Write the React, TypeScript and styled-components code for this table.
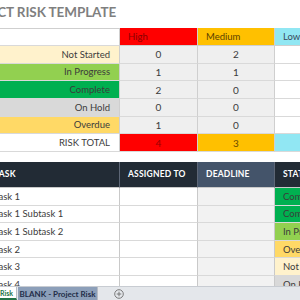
import React from "react";
import styled, { createGlobalStyle } from "styled-components";

const SCROLL = 75;
const COLS = `${120 + SCROLL}px 78px 77px 90px`;
const FONT = `"Lato", "Open Sans", "DejaVu Sans", sans-serif`;

const Global = createGlobalStyle`
  html, body { margin: 0; padding: 0; background: #fff; }
  body { font-family: ${FONT}; overflow: hidden; }
`;

const Window = styled.div`
  width: 300px;
  height: 300px;
  overflow: hidden;
  display: flex;
  flex-direction: column;
  background: #fff;
`;

const Viewport = styled.div`
  flex: 1;
  min-height: 0;
  overflow: hidden;
`;

const Sheet = styled.div`
  margin-left: -${SCROLL}px;
  display: flex;
  flex-direction: column;
`;

const Title = styled.h1`
  margin: 0;
  height: 28px;
  padding-left: 32px;
  font: bold 13.5px/25px ${FONT};
  color: #7f7f7f;
  white-space: nowrap;
  letter-spacing: -0.1px;
`;

const Grid = styled.div<{ $rows: string; $gap?: number }>`
  display: grid;
  grid-template-columns: ${COLS};
  grid-template-rows: ${(p) => p.$rows};
  margin-bottom: ${(p) => p.$gap ?? 0}px;
`;

const BaseCell = styled.div`
  box-sizing: border-box;
  display: flex;
  align-items: center;
  padding: 0 8px;
  font-size: 9.5px;
  white-space: nowrap;
  overflow: hidden;
  border-right: 1px solid #cfcfcf;
  border-bottom: 1px solid #d9d9d9;
  color: #3b3b3b;
`;

const CornerCell = styled(BaseCell)`
  background: #fff;
  border-top: 1px solid #cfcfcf;
`;

const LevelHead = styled(BaseCell)<{ $bg: string; $fg: string }>`
  background: ${(p) => p.$bg};
  color: ${(p) => p.$fg};
  border-bottom-color: #cfcfcf;
`;

const StatusLabel = styled(BaseCell)<{ $bg: string }>`
  background: ${(p) => p.$bg};
  justify-content: flex-end;
  padding-right: 9px;
`;

const CountCell = styled(BaseCell)<{ $bg?: string; $fg?: string }>`
  background: ${(p) => p.$bg ?? "#efefef"};
  color: ${(p) => p.$fg ?? "#3b3b3b"};
  justify-content: center;
  font-size: 10px;
`;

const TaskHead = styled(BaseCell)<{ $bg?: string; $indent?: number }>`
  background: ${(p) => p.$bg ?? "#222b35"};
  color: #fff;
  font-weight: bold;
  font-size: 8.5px;
  letter-spacing: 0.2px;
  padding-left: ${(p) => p.$indent ?? 8}px;
  border-right: 1px solid #5d6676;
  border-bottom: 1px solid #c9c9c9;
`;

const TaskCell = styled(BaseCell)<{ $bg?: string; $indent?: number }>`
  background: ${(p) => p.$bg ?? "#fff"};
  padding-left: ${(p) => p.$indent ?? 8}px;
  border-right: 1px solid #c9c9c9;
`;

const TabBar = styled.div`
  height: 14px;
  flex: none;
  box-sizing: border-box;
  display: flex;
  align-items: stretch;
  background: #e4e7eb;
  border-top: 1px solid #c8ccd2;
  overflow: hidden;
`;

const TabStrip = styled.div`
  display: flex;
  align-items: stretch;
`;

const ActiveTab = styled.div`
  box-sizing: border-box;
  width: 17px;
  flex: none;
  display: flex;
  align-items: center;
  overflow: hidden;
  padding-left: 0;
  background: #fff;
  border-bottom: 2px solid #217346;
  border-right: 1px solid #b7bcc4;
  margin-right: 1px;
  font: bold 7px ${FONT};
  color: #217346;
  white-space: nowrap;
`;

const Tab = styled.div`
  box-sizing: border-box;
  width: 80px;
  flex: none;
  display: flex;
  align-items: center;
  justify-content: center;
  font: bold 8px ${FONT};
  white-space: nowrap;
  overflow: hidden;
  color: #1f2d48;
  background: #8c9fb9;
  border-right: 1px solid #b7bcc4;
`;

const AddTab = styled.div`
  display: flex;
  align-items: center;
  padding-left: 16px;
`;

const ADD = (
  <svg width="10" height="10" viewBox="0 0 10 10">
    <circle cx="5" cy="5" r="4.3" fill="none" stroke="#6e6e6e" strokeWidth="0.9" />
    <path d="M5 2.7v4.6M2.7 5h4.6" stroke="#6e6e6e" strokeWidth="0.9" />
  </svg>
);

const statuses = [
  { label: "Not Started", bg: "#fff2cc", high: 0, med: 2 },
  { label: "In Progress", bg: "#92d050", high: 1, med: 1 },
  { label: "Complete", bg: "#00b050", high: 2, med: 0 },
  { label: "On Hold", bg: "#d9d9d9", high: 0, med: 0 },
  { label: "Overdue", bg: "#ffd966", high: 1, med: 0 },
];

const statusBg: Record<string, string> = {
  "Not Started": "#fff2cc",
  "In Progress": "#92d050",
  Complete: "#00b050",
  "On Hold": "#d9d9d9",
  Overdue: "#ffd966",
};

const tasks = [
  { name: "Task 1", status: "Complete" },
  { name: "Task 1 Subtask 1", status: "Complete" },
  { name: "Task 1 Subtask 2", status: "In Progress" },
  { name: "Task 2", status: "Overdue" },
  { name: "Task 3", status: "Not Started" },
  { name: "Task 4", status: "On Hold" },
];

const TASK_INDENT = 69;

export default function App() {
  return (
    <>
      <Global />
      <Window>
        <Viewport>
          <Sheet>
            <Title>PROJECT RISK TEMPLATE</Title>
            <Grid $rows="18px repeat(6, 17.67px)" $gap={10}>
              <CornerCell />
              <LevelHead $bg="#ff0000" $fg="#8a0000">High</LevelHead>
              <LevelHead $bg="#ffc000" $fg="#5b4000">Medium</LevelHead>
              <LevelHead $bg="#91e7f3" $fg="#3a4a5a">Low</LevelHead>
              {statuses.map((s) => (
                <React.Fragment key={s.label}>
                  <StatusLabel $bg={s.bg}>{s.label}</StatusLabel>
                  <CountCell>{s.high}</CountCell>
                  <CountCell>{s.med}</CountCell>
                  <CountCell $bg="#fff" />
                </React.Fragment>
              ))}
              <StatusLabel $bg="#fff">RISK TOTAL</StatusLabel>
              <CountCell $bg="#ff0000" $fg="#9a0000">4</CountCell>
              <CountCell $bg="#ffc000" $fg="#6a4a00">3</CountCell>
              <CountCell $bg="#91e7f3" />
            </Grid>
            <Grid $rows="26px repeat(6, 17.6px)">
              <TaskHead $indent={TASK_INDENT}>TASK</TaskHead>
              <TaskHead>ASSIGNED TO</TaskHead>
              <TaskHead $bg="#44546a">DEADLINE</TaskHead>
              <TaskHead>STATUS</TaskHead>
              {tasks.map((t) => (
                <React.Fragment key={t.name}>
                  <TaskCell $indent={TASK_INDENT}>{t.name}</TaskCell>
                  <TaskCell />
                  <TaskCell $bg="#f2f2f2" />
                  <TaskCell $bg={statusBg[t.status]}>{t.status}</TaskCell>
                </React.Fragment>
              ))}
            </Grid>
          </Sheet>
        </Viewport>
        <TabBar>
          <TabStrip>
            <ActiveTab>Risk</ActiveTab>
            <Tab>BLANK - Project Risk</Tab>
          </TabStrip>
          <AddTab>{ADD}</AddTab>
        </TabBar>
      </Window>
    </>
  );
}
